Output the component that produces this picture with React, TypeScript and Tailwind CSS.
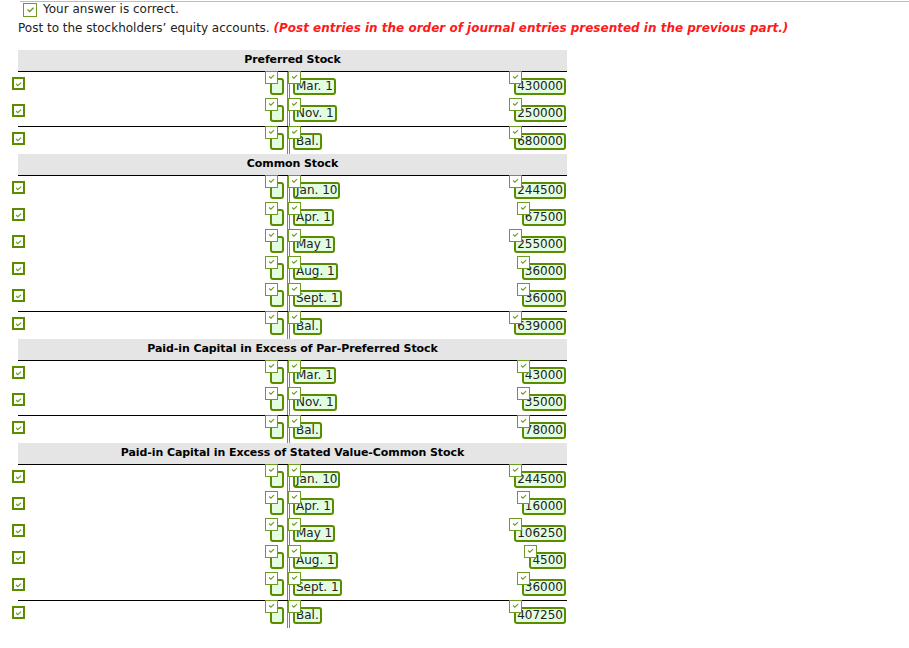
import React from "react";

type Entry = { date: string; amount: string };
type Account = { title: string; entries: Entry[]; balance: string };

const accounts: Account[] = [
  {
    title: "Preferred Stock",
    entries: [
      { date: "Mar. 1", amount: "430000" },
      { date: "Nov. 1", amount: "250000" },
    ],
    balance: "680000",
  },
  {
    title: "Common Stock",
    entries: [
      { date: "Jan. 10", amount: "244500" },
      { date: "Apr. 1", amount: "67500" },
      { date: "May 1", amount: "255000" },
      { date: "Aug. 1", amount: "36000" },
      { date: "Sept. 1", amount: "36000" },
    ],
    balance: "639000",
  },
  {
    title: "Paid-in Capital in Excess of Par-Preferred Stock",
    entries: [
      { date: "Mar. 1", amount: "43000" },
      { date: "Nov. 1", amount: "35000" },
    ],
    balance: "78000",
  },
  {
    title: "Paid-in Capital in Excess of Stated Value-Common Stock",
    entries: [
      { date: "Jan. 10", amount: "244500" },
      { date: "Apr. 1", amount: "16000" },
      { date: "May 1", amount: "106250" },
      { date: "Aug. 1", amount: "4500" },
      { date: "Sept. 1", amount: "36000" },
    ],
    balance: "407250",
  },
];

function Tick({ className }: { className?: string }) {
  return (
    <svg viewBox="0 0 10 10" className={className}>
      <polyline points="2.3,5 4.3,6.8 7.8,3.4" fill="none" stroke="#6c9d22" strokeWidth="1.3" />
    </svg>
  );
}

// little marker sitting on the top-left corner of each graded field
function Badge() {
  return (
    <span className="absolute left-[-7px] top-[-9px] z-10 flex h-[13px] w-[13px] items-start justify-center border border-[#6c9d22] bg-white">
      <Tick className="h-[9px] w-[9px]" />
    </span>
  );
}

function Field({ value, className }: { value: string; className?: string }) {
  return (
    <span
      className={`relative inline-block h-[17px] rounded-[3px] border-2 border-[#5b8c00] bg-[#e2fde2] text-[12px] leading-[13px] text-[#222] ${className ?? ""}`}
    >
      <Badge />
      <span className="block overflow-hidden whitespace-nowrap px-px">{value}</span>
    </span>
  );
}

function RowCheck() {
  return (
    <span className="absolute left-[-6px] top-[5px] flex h-[13px] w-[13px] items-center justify-center border-2 border-[#5b8c00] bg-white">
      <Tick className="h-[10px] w-[10px]" />
    </span>
  );
}

function Row({ date, amount, bal }: { date: string; amount: string; bal?: boolean }) {
  return (
    <div className={`relative flex ${bal ? "h-[28px] border-t border-black" : "h-[27px]"}`}>
      <RowCheck />
      <div className="flex w-[272px] justify-end border-r-[3px] border-double border-[#808080] pr-[3px] pt-[6px]">
        <Field value="" className="w-[14px]" />
      </div>
      <div className="flex flex-1 items-start justify-between pl-[3px] pr-px pt-[6px]">
        <Field value={date} />
        <Field value={amount} className="text-right" />
      </div>
    </div>
  );
}

function TAccount({ account }: { account: Account }) {
  return (
    <div>
      <div className="flex h-[22px] items-center justify-center border-b border-black bg-[#e5e5e5] text-[11px] font-bold tracking-[-0.08px] text-black">
        {account.title}
      </div>
      {account.entries.map((e) => (
        <Row key={e.date} date={e.date} amount={e.amount} />
      ))}
      <Row date="Bal." amount={account.balance} bal />
    </div>
  );
}

export default function App() {
  return (
    <div className="h-[648px] w-[909px] overflow-hidden bg-white pt-px font-['DejaVu_Sans',sans-serif] text-[12px] text-[#222]">
      <div className="ml-[20px] border-t border-[#bdbdbd]" />
      <div className="ml-[23px] flex h-[15px] items-center gap-[6px]">
        <span className="flex h-[14px] w-[14px] items-center justify-center border-[1.5px] border-[#6c9d22] bg-white">
          <Tick className="h-[11px] w-[11px]" />
        </span>
        <span className="leading-[15px]">Your answer is correct.</span>
      </div>
      <p className="ml-[18px] mt-[3px] leading-[16px]">
        Post to the stockholders’ equity accounts.{" "}
        <span className="font-bold italic text-[#ff1a1a]">
          (Post entries in the order of journal entries presented in the previous part.)
        </span>
      </p>
      <div className="ml-[18px] mt-[14px] w-[549px]">
        {accounts.map((a) => (
          <TAccount key={a.title} account={a} />
        ))}
      </div>
    </div>
  );
}
